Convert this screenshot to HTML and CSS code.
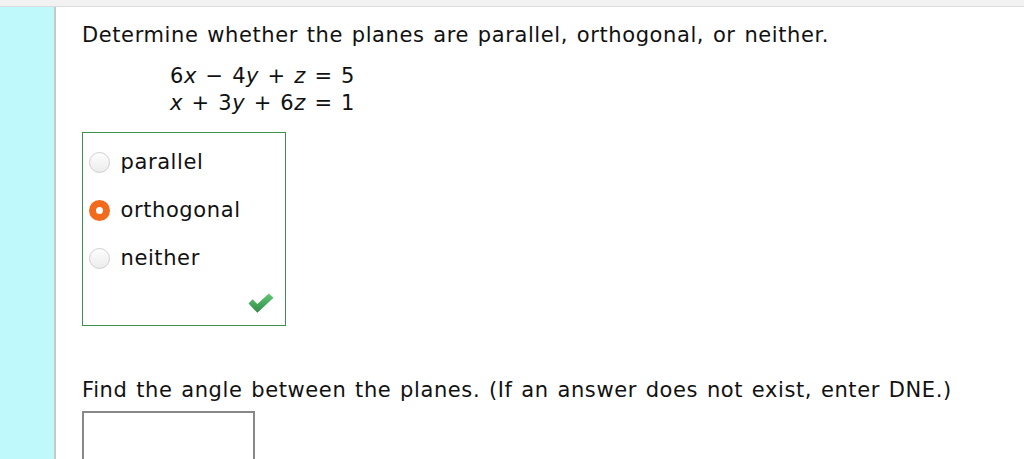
FILE: index.html
```html
<!DOCTYPE html>
<html>
<head>
<meta charset="utf-8">
<link rel="stylesheet" href="styles.css">
</head>
<body>
<div class="topbar"></div>
<div class="page">
  <div class="side"></div>
  <main class="content">
    <p class="question">Determine whether the planes are parallel, orthogonal, or neither.</p>
    <div class="equations">
      <div class="eq">6<i>x</i> &minus; 4<i>y</i> + <i>z</i> = 5</div>
      <div class="eq"><i>x</i> + 3<i>y</i> + 6<i>z</i> = 1</div>
    </div>
    <div class="choices">
      <label class="choice"><span class="radio"></span>parallel</label>
      <label class="choice"><span class="radio selected"></span>orthogonal</label>
      <label class="choice"><span class="radio"></span>neither</label>
      <div class="check-row">
        <svg class="check" width="26" height="21" viewBox="0 0 25 20">
          <defs>
            <linearGradient id="g" x1="0" y1="0" x2="0" y2="1">
              <stop offset="0" stop-color="#62c774"/>
              <stop offset="1" stop-color="#2f8a46"/>
            </linearGradient>
          </defs>
          <path d="M0.5 10 L4.5 6 L9 10.5 L20 0.5 L24.5 4.5 L9 19 Z" fill="url(#g)"/>
        </svg>
      </div>
    </div>
    <p class="question second">Find the angle between the planes. (If an answer does not exist, enter DNE.)</p>
    <div class="answer"></div>
  </main>
</div>
</body>
</html>
```
FILE: styles.css
```css
html, body {
  margin: 0;
  padding: 0;
  background: #fff;
  overflow: hidden;
}
body {
  font-family: "DejaVu Sans", Verdana, sans-serif;
  color: #111;
  width: 1024px;
  height: 459px;
}
.topbar {
  height: 6px;
  background: #f2f2f2;
  border-bottom: 1px solid #dcdcdc;
}
.page {
  display: flex;
  height: 452px;
}
.side {
  width: 54px;
  background: #bff9fc;
  border-right: 2px solid #c8c8c8;
  flex: none;
}
.content {
  padding-left: 26px;
  flex: 1;
}
.question {
  margin: 0;
  font-size: 21px;
  line-height: 24px;
  padding-top: 16px;
  letter-spacing: 0.6px;
  word-spacing: 1.5px;
}
.equations {
  margin: 16px 0 0 88px;
  font-size: 21px;
  line-height: 27px;
  letter-spacing: 0.6px;
  word-spacing: 1.2px;
}
.eq i {
  font-style: italic;
}
.choices {
  margin-top: 15px;
  width: 204px;
  height: 194px;
  border: 1.5px solid #3d8f52;
  box-sizing: border-box;
  padding-top: 17px;
}
.choice {
  display: flex;
  align-items: center;
  height: 24px;
  margin-bottom: 24px;
  font-size: 21px;
  letter-spacing: 0.6px;
  padding-left: 5.5px;
}
.radio {
  width: 21px;
  height: 21px;
  border-radius: 50%;
  border: 1px solid #cfcfcf;
  background: linear-gradient(#fdfdfd, #ececec);
  margin-right: 11px;
  box-sizing: border-box;
  flex: none;
}
.radio.selected {
  border: 7px solid #f26b1c;
  background: #fff;
}
.check-row {
  display: flex;
  justify-content: flex-end;
  padding-right: 11px;
  margin-top: -1px;
}
.second {
  padding-top: 52px;
}
.answer {
  margin-top: 9px;
  width: 173px;
  height: 60px;
  border: 2px solid #888;
  box-sizing: border-box;
}
```
